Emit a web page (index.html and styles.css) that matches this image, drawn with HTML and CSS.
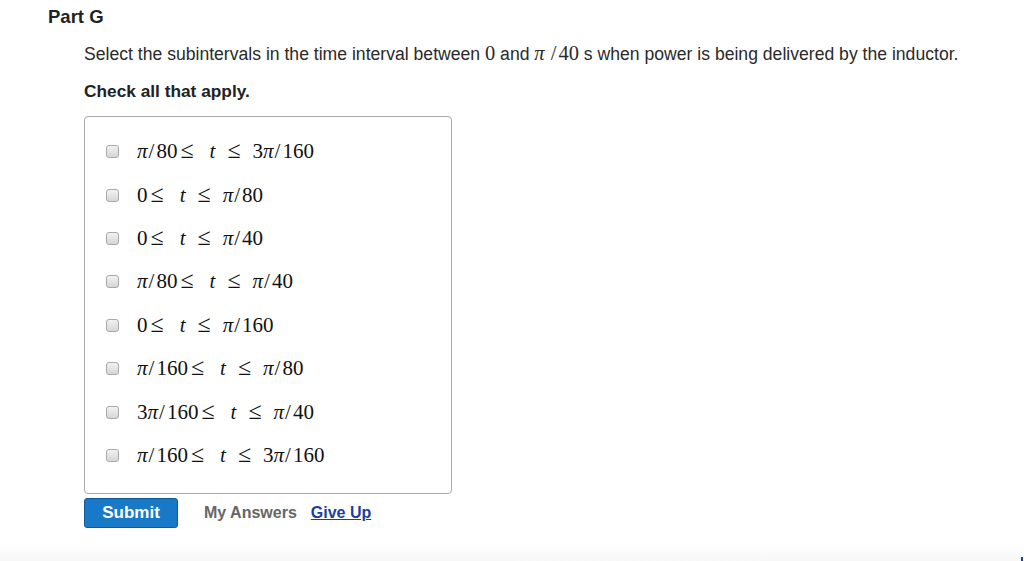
FILE: index.html
```html
<!DOCTYPE html>
<html>
<head>
<meta charset="utf-8">
<link rel="stylesheet" href="styles.css">
</head>
<body>
<div class="page">
  <h2 class="part">Part G</h2>
  <div class="content">
    <p class="prompt">Select the subintervals in the time interval between <span class="m">0</span> and <span class="m"><i>π</i> <span class="sl">/</span>40</span> s when power is being delivered by the inductor.</p>
    <p class="instr">Check all that apply.</p>
    <div class="box">
      <label class="opt"><span class="cb"></span><span class="m"><i>π</i><span class="sl">/</span>80<span class="le1">≤</span><i class="t">t</i><span class="le2">≤</span>3<i>π</i><span class="sl">/</span>160</span></label>
      <label class="opt"><span class="cb"></span><span class="m">0<span class="le1">≤</span><i class="t">t</i><span class="le2">≤</span><i>π</i><span class="sl">/</span>80</span></label>
      <label class="opt"><span class="cb"></span><span class="m">0<span class="le1">≤</span><i class="t">t</i><span class="le2">≤</span><i>π</i><span class="sl">/</span>40</span></label>
      <label class="opt"><span class="cb"></span><span class="m"><i>π</i><span class="sl">/</span>80<span class="le1">≤</span><i class="t">t</i><span class="le2">≤</span><i>π</i><span class="sl">/</span>40</span></label>
      <label class="opt"><span class="cb"></span><span class="m">0<span class="le1">≤</span><i class="t">t</i><span class="le2">≤</span><i>π</i><span class="sl">/</span>160</span></label>
      <label class="opt"><span class="cb"></span><span class="m"><i>π</i><span class="sl">/</span>160<span class="le1">≤</span><i class="t">t</i><span class="le2">≤</span><i>π</i><span class="sl">/</span>80</span></label>
      <label class="opt"><span class="cb"></span><span class="m">3<i>π</i><span class="sl">/</span>160<span class="le1">≤</span><i class="t">t</i><span class="le2">≤</span><i>π</i><span class="sl">/</span>40</span></label>
      <label class="opt"><span class="cb"></span><span class="m"><i>π</i><span class="sl">/</span>160<span class="le1">≤</span><i class="t">t</i><span class="le2">≤</span>3<i>π</i><span class="sl">/</span>160</span></label>
    </div>
    <div class="actions">
      <button class="submit">Submit</button>
      <span class="myans">My Answers</span>
      <a class="giveup" href="#">Give Up</a>
    </div>
  </div>
</div>
<div class="footer"><span class="tick"></span></div>
</body>
</html>
```

FILE: styles.css
```css
html, body {
  margin: 0;
  padding: 0;
  background: #fff;
  font-family: "Liberation Sans", Arial, sans-serif;
  color: #222;
}
.page {
  height: 547px;
  padding: 0 0 0 48px;
  box-sizing: border-box;
}
.part {
  margin: 0;
  padding-top: 7px;
  font-size: 18.5px;
  font-weight: bold;
  line-height: 20px;
  color: #222;
}
.content {
  padding-left: 36px;
}
.prompt {
  margin: 16px 0 0;
  font-size: 17.6px;
  line-height: 20px;
  height: 20px;
  color: #2a2a2a;
}
.m {
  font-family: "Liberation Serif", "DejaVu Serif", serif;
  font-size: 21px;
  line-height: 1;
  white-space: nowrap;
}
.m i {
  font-style: italic;
}
.sl {
  margin: 0 2px 0 1px;
}
.le1, .le2 {
  font-size: 24px;
  line-height: 0;
}
.le1 {
  margin-left: 3px;
}
.t {
  margin: 0 12px 0 16px;
}
.le2 {
  margin-right: 12px;
}
.prompt .m {
  font-size: 20.5px;
}
.instr {
  margin: 18px 0 0;
  font-size: 17.3px;
  font-weight: bold;
  line-height: 20px;
  height: 20px;
  color: #222;
}
.box {
  margin-top: 15px;
  width: 368px;
  height: 378px;
  box-sizing: border-box;
  border: 1px solid #a9a9a9;
  border-radius: 4px;
  padding: 13px 0 0 21px;
  display: flex;
  flex-direction: column;
}
.opt {
  display: flex;
  align-items: center;
  height: 43.4px;
  gap: 18px;
  color: #111;
}
.cb {
  width: 13px;
  height: 13px;
  box-sizing: border-box;
  border: 1px solid #a8a8a8;
  border-radius: 3px;
  background: linear-gradient(#f2f2f2, #d6d6d6);
  flex: none;
}
.actions {
  margin-top: 4px;
  display: flex;
  align-items: center;
  height: 29px;
}
.submit {
  width: 94px;
  height: 30px;
  box-sizing: border-box;
  border: 1px solid #145a96;
  border-radius: 3px;
  background: #1879c8;
  color: #fff;
  font-family: "Liberation Sans", Arial, sans-serif;
  font-size: 17px;
  font-weight: bold;
  padding: 0;
}
.myans {
  margin-left: 26px;
  font-size: 16px;
  font-weight: bold;
  color: #666;
}
.giveup {
  margin-left: 14px;
  font-size: 16px;
  font-weight: bold;
  color: #1b3f9e;
  text-decoration: underline;
}
.footer {
  height: 14px;
  background: linear-gradient(#fdfdfd, #f7f7f7);
  position: relative;
}
.tick {
  position: absolute;
  right: 1px;
  bottom: 0;
  width: 2px;
  height: 4px;
  background: #1b3f9e;
}
```
